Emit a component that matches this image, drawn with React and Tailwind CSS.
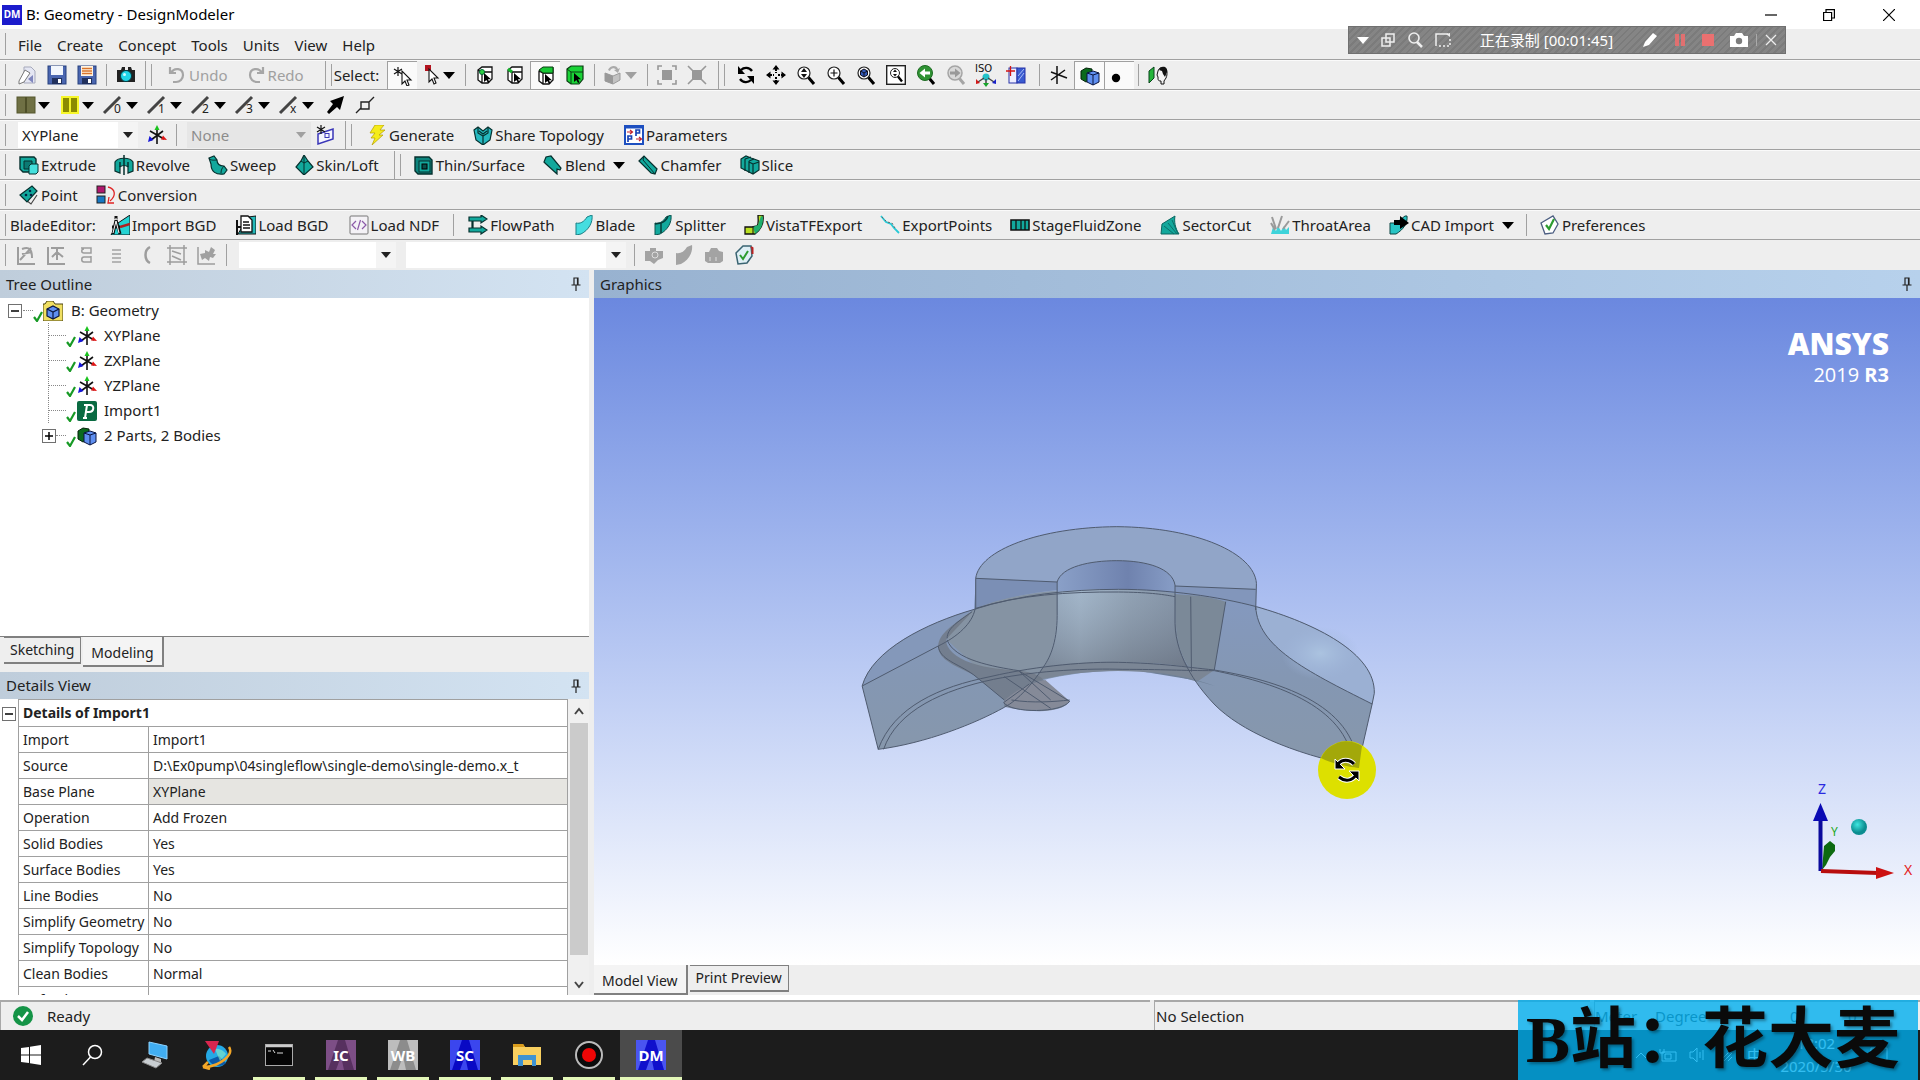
import clsx from "clsx"

const menus = ["File", "Create", "Concept", "Tools", "Units", "View", "Help"]

const details = [
  ["Import", "Import1"],
  ["Source", "D:\\Ex0pump\\04singleflow\\single-demo\\single-demo.x_t"],
  ["Base Plane", "XYPlane"],
  ["Operation", "Add Frozen"],
  ["Solid Bodies", "Yes"],
  ["Surface Bodies", "Yes"],
  ["Line Bodies", "No"],
  ["Simplify Geometry", "No"],
  ["Simplify Topology", "No"],
  ["Clean Bodies", "Normal"],
  ["Refresh", "No"],
]

const teal = "#12a89c"
const dark = "#06302e"

const lens = (
  <>
    <circle cx="8" cy="8" r="6" fill="#fff" stroke="#222" strokeWidth="1.2" />
    <path d="M12.5 12.5L18 19" stroke="#000" strokeWidth="3" />
  </>
)

const cubeOutline = (
  <path d="M3 5l4-3h10v12l-4 4H7L3 15zM3 5l4 2h10M7 7v11" fill="#fff" stroke="#111" strokeWidth="1.3" />
)
const cubeCursor = <path d="M9 8v9l2.4-2 1.6 3 1.5-.8-1.5-3H16z" fill="#000" />

const axes = (
  <>
    <path d="M10 4v15M3 6l14 8M16 6L4 15" stroke="#111" strokeWidth="1.6" fill="none" />
    <path d="M10 0L7.500 5h5z" fill="#19c21d" />
    <path d="M20 15l-6-.5 2-4z" fill="#e01414" />
    <path d="M1 17l1.500-6 4 4z" fill="#1414d8" />
  </>
)

const bodies = (
  <>
    <path d="M1 5l5-3 6 1v11l-6 2-5-3z" fill="#0b6a1d" stroke="#04210a" />
    <path d="M7 7l6-2 6 2v9l-6 3-6-3z" fill="#5f8ff0" stroke="#0a1540" />
    <path d="M7 7l6 2 6-2M13 9v10" fill="none" stroke="#0a1540" />
  </>
)

const bladeShape = "M2 8c4 1 8-1 11-6l5-2c1 7-3 15-11 19l-5 1z"

const icons = {
  newFile: <><path d="M7 2h7l4 4v12H7z" fill="#e4e6f3" stroke="#a6a9bb" /><path d="M2 16l6-11 5 3-6 9-5 2z" fill="#fff" stroke="#777" /><path d="M11 14l5-4v8z" fill="#7f86bd" /></>,
  save: <><rect x="1" y="1" width="18" height="18" fill="#4a66b0" stroke="#27407e" /><rect x="4" y="1" width="12" height="9" fill="#f2f6fc" /><rect x="5" y="13" width="10" height="6" fill="#20305c" /><rect x="11" y="14" width="3" height="4" fill="#fff" /></>,
  saveAs: <><rect x="1" y="1" width="18" height="18" fill="#4a66b0" stroke="#27407e" /><rect x="4" y="1" width="12" height="10" fill="#fff3e0" /><path d="M5 3.500h10M5 6h10M5 8.500h10" stroke="#d9752c" strokeWidth="1.400" /><rect x="5" y="13" width="10" height="6" fill="#20305c" /><rect x="11" y="14" width="3" height="4" fill="#fff" /></>,
  camera: <><path d="M1 5h4l1-3h3v3h3V2h3l1 3h3v12H1z" fill="#222" /><circle cx="10" cy="11" r="5.500" fill="#21d6e8" stroke="#043c42" /><circle cx="8.500" cy="9.500" r="1.500" fill="#cffaff" /></>,
  undo: <path d="M3 2v6h6M4 8c3-6 12-5 12 2 0 4-3 7-7 7H6" fill="none" stroke="#a6a6a6" strokeWidth="2.200" />,
  redo: <path d="M17 2v6h-6M16 8C13 2 4 3 4 10c0 4 3 7 7 7h3" fill="none" stroke="#a6a6a6" strokeWidth="2.200" />,
  pick: <><path d="M5 1v9M1 3l8 5M9 3L1 8" stroke="#111" strokeWidth="1.200" /><path d="M9 5v13l3-3 2 5 2-1-2-5h4z" fill="#fff" stroke="#111" strokeWidth="1.100" /></>,
  pickMode: <g transform="translate(4 0)"><rect x="0" y="0" width="6" height="6" fill="#b3131e" /><path d="M4 4v13l3-3 2 5 2-1-2-5h4z" fill="#fff" stroke="#111" strokeWidth="1.100" /></g>,
  selPoint: <>{cubeOutline}<circle cx="7" cy="7" r="2.500" fill="#2fd044" stroke="#063" />{cubeCursor}</>,
  selEdge: <>{cubeOutline}<path d="M3 4l4 3" stroke="#12b32a" strokeWidth="3" />{cubeCursor}</>,
  selFace: <>{cubeOutline}<path d="M3 4l4-3h10v6H7z" fill="#18c834" stroke="#0a3d12" />{cubeCursor}</>,
  selBody: <><path d="M2 4l4-3h12v13l-4 5H6l-4-3z" fill="#19d236" stroke="#0a3d12" strokeWidth="1.200" /><path d="M2 4l4 3h12M6 7v12" fill="none" stroke="#0a3d12" />{cubeCursor}</>,
  grayBox: <><path d="M2 8l8 3 7-3v7l-7 4-8-3z" fill="#c2c2c2" stroke="#9b9b9b" /><path d="M2 8l8 3v8l-8-3z" fill="#999" /><path d="M5 5c2-5 9-5 10-1l2-1-2 5-4-3 2-.5C12 3 8 2 7 6z" fill="#aaa" /></>,
  expand: <><rect x="5" y="5" width="10" height="10" fill="#989898" /><path d="M1 5V1h4M15 1h4v4M19 15v4h-4M5 19H1v-4" stroke="#989898" fill="none" strokeWidth="1.600" /></>,
  shrink: <><rect x="5" y="5" width="10" height="10" fill="#989898" /><path d="M1 1l5 5M19 1l-5 5M19 19l-5-5M1 19l5-5" stroke="#989898" strokeWidth="1.600" /></>,
  rotate: <><path d="M5 5c3-3 8-3 11 1M15 15c-3 3-8 3-11-1" fill="none" stroke="#000" strokeWidth="2.400" /><path d="M2 1v8h7zM18 19v-8h-7z" fill="#000" /></>,
  pan: <><path d="M10 4v4M10 12v4M4 10h4M12 10h4" stroke="#000" strokeWidth="2" strokeDasharray="2 1" /><path d="M10 0l3.500 4.500h-7zM10 20l3.500-4.500h-7zM0 10l4.500-3.500v7zM20 10l-4.500-3.500v7z" fill="#000" /></>,
  zoomDrag: <>{lens}<path d="M8 3l3 4H5zM8 13l3-4H5z" fill="#111" /></>,
  zoomIn: <>{lens}<path d="M8 4.500v7M4.500 8h7" stroke="#111" strokeWidth="1.200" /></>,
  zoomFit: <>{lens}<path d="M4.500 6L8 4l3.500 2v4L8 12l-3.500-2z" fill="#3159b8" stroke="#112" /><path d="M4.500 6L8 8l3.500-2M8 8v4" stroke="#112" fill="none" /></>,
  zoomBox: <><rect x="0.700" y="0.700" width="18.600" height="18.600" fill="#fff" stroke="#222" strokeWidth="1.400" /><circle cx="9" cy="8" r="4.500" fill="none" stroke="#222" /><path d="M12 11.500l4 5" stroke="#000" strokeWidth="2.400" /><path d="M9 4.500l2 2.500H7zM9 11.500L11 9H7z" fill="#111" /></>,
  zoomPrev: <><path d="M13 13l5 6" stroke="#000" strokeWidth="3" /><circle cx="9" cy="8" r="7.500" fill="#2f9233" stroke="#1d6b22" /><path d="M3.500 8L9 3.500V6.500h5v3H9v3z" fill="#fff" /></>,
  zoomNext: <><path d="M13 13l5 6" stroke="#a5a5a5" strokeWidth="3" /><circle cx="9" cy="8" r="7" fill="#d8d8d8" stroke="#a5a5a5" strokeWidth="1.500" /><path d="M14.500 8L9 3.500V6.500H4v3h5v3z" fill="#999" /></>,
  lookAt: <><rect x="3" y="3" width="8" height="15" fill="#eef" stroke="#2733a8" /><rect x="11" y="3" width="8" height="15" fill="#3a5bd0" stroke="#2733a8" /><path d="M12 16l6-8M12 11l6-7" stroke="#a9bcf5" /><path d="M0 6h9M4.500 1v10" stroke="#d31515" strokeWidth="1.300" /></>,
  axis: <path d="M8 1v18M2 15L16 5M2 7l16 6" stroke="#111" strokeWidth="1.500" />,
  bodies,
  dot: <circle cx="6" cy="12" r="4.200" fill="#000" />,
  face: <><path d="M1 6l5-4v11l-5 5z" fill="#25b53a" stroke="#06421a" /><path d="M10 6c1-5 9-5 9 1 0 2 0 4-1 6l-2 3v3h-3v-3c-3 0-3-1-3-4l-1-2z" fill="#f3f3f3" stroke="#111" /><path d="M11 5c2-5 9-4 8 2l-2 5-2-3-1-3z" fill="#111" /></>,
  olive: <><rect x="1" y="2" width="18" height="16" fill="#6f7044" /><path d="M10 2v16" stroke="#43441f" strokeWidth="1.500" /><rect x="1" y="2" width="18" height="16" fill="none" stroke="#55562d" /></>,
  yellow: <><rect x="1" y="1" width="18" height="18" fill="#f7f72a" /><rect x="3" y="3" width="14" height="14" fill="#8b8b00" /><path d="M10 1v18" stroke="#f2f22a" strokeWidth="2" /></>,
  arrowPin: <path d="M19 1l-4 14-3-3-8 7-2-2 6-8-3-3z" fill="#000" />,
  nodeBox: <path d="M1 18l5-5M6 7h8v7H6zM14 7l5-5" fill="none" stroke="#222" strokeWidth="1.400" />,
  axes,
  sketch: <><path d="M2 9l15-5v10L2 19z" fill="#f5f5ff" stroke="#3a36b8" strokeWidth="1.500" /><rect x="9" y="8.500" width="4" height="4" fill="none" stroke="#3a36b8" /><path d="M5 0v9M1 2l8 5M9 2L1 7" stroke="#111" strokeWidth="1.200" /></>,
  bolt: <path d="M8 0h9l-4 5h5l-6 5h4L5 20l3-7H4l4-5H3z" fill="#f5ec1b" stroke="#b49d00" strokeWidth=".7" />,
  share: <><path d="M1 5l4-3 5 4 5-4 4 3-2 10-7 5-7-5z" fill="#25b9c0" stroke={dark} strokeWidth="1.200" /><path d="M5 2v6l5 3 5-3V2M10 11v9M6 6l4 3 4-3" fill="none" stroke={dark} strokeWidth="1.200" /></>,
  params: <><rect x="1" y="1" width="18" height="18" fill="#fff" stroke="#1d4fc0" strokeWidth="2" /><path d="M1 2h18" stroke="#1d4fc0" strokeWidth="3" /><path d="M3 7h5M6 5l2.500 2L6 9M12 14h5M15 12l2.500 2-2.500 2" stroke="#c3202b" fill="none" strokeWidth="1.200" /><path d="M12 11V5h3.500v3H12M4 17v-6h3.500v3H4" stroke="#1842b5" fill="none" strokeWidth="1.700" /></>,
  extrude: <><path d="M1 2h14l2 2v13H4l-3-3z" fill={teal} stroke={dark} strokeWidth="1.400" /><path d="M5 6h8v8H5z" fill="#0b7a73" stroke={dark} /><path d="M10 11l2-2h7v8l-2 2h-7z" fill="#44e0dd" stroke={dark} /></>,
  revolve: <><path d="M1 7c3-5 15-5 18 0v9l-5 2v-6c-2-2-6-2-8 0v6l-5-2z" fill={teal} stroke={dark} strokeWidth="1.200" /><path d="M10 0v20M6 7v5M14 7v5" stroke={dark} strokeWidth="1.500" /></>,
  sweep: <><path d="M1 3l5-2 3 4c0 4 3 6 7 6l3 4-3 4c-8 1-13-2-13-10z" fill={teal} stroke={dark} strokeWidth="1.200" /><path d="M1 3c2 3 5 2 8 2M13 18c0-3 1-5 3-7" fill="none" stroke={dark} /></>,
  loft: <><path d="M10 0l4 6 5 6-9 8-8-8 5-6z" fill={teal} stroke={dark} strokeWidth="1.200" /><path d="M10 1v19M7 6l3 2 4-2" fill="none" stroke={dark} /></>,
  thin: <><path d="M1 2h14l3 3v14H4l-3-3z" fill="#0d857d" stroke={dark} strokeWidth="1.400" /><rect x="5" y="6" width="11" height="11" fill={teal} stroke={dark} /><rect x="8" y="9" width="5" height="5" fill="#0a4f4b" stroke="#000" /></>,
  blend: <path d="M1 7l2-5 5-1 10 12-1 2-3-1v5L3 9z" fill={teal} stroke={dark} strokeWidth="1.200" />,
  chamfer: <><path d="M1 6l5-5 13 13-2 5-4-1z" fill={teal} stroke={dark} strokeWidth="1.200" /><path d="M6 1l-1 4 12 14" fill="none" stroke={dark} /></>,
  slice: <><path d="M1 4l5-3 5 2 3 1 5 2v9l-6 4-4-2-4-2-4-2z" fill={teal} stroke={dark} strokeWidth="1.200" /><path d="M5 4v12M9 6v12M13 9v10M5 4l6-2M9 6l5-2M13 9l6-2M9 7l4 2" fill="none" stroke={dark} strokeWidth="1.200" /></>,
  point: <><path d="M3 12l9 7 6-9" fill="none" stroke="#444" strokeWidth="1.200" /><path d="M1 10L13 1l5 5-10 11z" fill={teal} stroke={dark} strokeWidth="1.200" /><circle cx="7" cy="10" r="1.300" fill="#024" /><circle cx="11" cy="6" r="1.300" fill="#024" /><circle cx="12" cy="10" r="1.300" fill="#024" /></>,
  conversion: <><rect x="1" y="1" width="8" height="7" fill="#b0186e" stroke="#222" /><rect x="1" y="11" width="8" height="7" fill="#1678c4" stroke="#222" /><path d="M12 2c8 2 8 9 2 14M13 12l-1 6h6" fill="none" stroke="#e02424" strokeWidth="1.300" /></>,
  importBgd: <><path d="M8 8L20 0v20H1z" fill="#24d3d3" stroke="#111" /><path d="M10 12l10-3" stroke="#b02020" strokeWidth="2.500" /><path d="M6 1v3M3 19L6 5l4 14M2 12h8" fill="none" stroke="#111" strokeWidth="3" /><path d="M6 3v2M3 18L6 6l3 12" fill="none" stroke="#fff" /></>,
  loadBgd: <><path d="M12 2l8-1v18H2z" fill="#24b9b9" stroke="#111" /><path d="M1 20V5M1 12h5" stroke="#111" strokeWidth="2" /><path d="M5 1h7l4 4v12H5z" fill="#fff" stroke="#111" strokeWidth="1.300" /><path d="M7 7h6M7 10h7M7 13h7" stroke="#111" strokeWidth="1.300" /></>,
  loadNdf: <><rect x="1" y="1" width="18" height="18" rx="1" fill="#f4f2f6" stroke="#777" /><path d="M7 6l-4 4 4 4M13 6l4 4-4 4M11.500 5l-3 10" fill="none" stroke="#8b5aa8" strokeWidth="1.200" /></>,
  flowPath: <path d="M1 2h12V0l6 4-6 4V6H5v7h8v-2l6 4-6 4v-2H1v-4h3V6H1z" fill={teal} stroke={dark} strokeWidth="1.200" />,
  blade: <path d={bladeShape} fill="#45dde0" stroke="#187f84" />,
  splitter: <><path d={bladeShape} fill={teal} stroke="#0a5550" /><path d="M8 8v10M2 9l6-1c3-1 6-4 7-7" fill="none" stroke="#083c39" strokeWidth="1.500" /></>,
  vista: <><path d="M1 12h7l5-1c2-2 1-6 1-11h5c1 8-1 14-8 19H1z" fill="#b9df21" stroke="#111" strokeWidth="1.300" /><path d="M9 12l5-2 3-9 2 1c0 7-1 12-8 17z" fill="#1fae6d" /><path d="M9 12v7" stroke="#111" /></>,
  exportPts: <><path d="M1 1l5 6 5 2 3 4 5 5" stroke="#26c9d6" strokeWidth="1.800" fill="none" /><path d="M2 2l5 5 5 1 3 5" stroke="#666" strokeWidth="1" strokeDasharray="2 2" fill="none" /></>,
  stage: <><path d="M1 5h18v10H1z" fill={teal} stroke="#111" strokeWidth="1.600" /><path d="M6 5v10M11 5v10M15 5v10" stroke="#111" strokeWidth="1.300" /></>,
  sector: <><path d="M2 9L15 1c-1 5 0 12 4 18H1z" fill={teal} stroke="#0a6660" /><path d="M4 11l10 8M8 8l9 11M12 5l6 14" stroke="#0b6f69" /></>,
  throat: <><path d="M1 19l2-7 3 4 2-5 3 5 3-5 2 4 3-3v7z" fill="#3ed3da" /><path d="M2 2l4 12M12 1L8 13M1 8l4 7M19 6l-6 8" stroke="#9a9a9a" strokeWidth="2" /></>,
  cadImport: <><path d="M1 8h6l9-7h2c1 7-4 14-11 18H1z" fill="#28c4c4" stroke="#0a4442" /><path d="M5 5h6V1l9 7-9 6v-4H5z" fill="#000" /></>,
  prefs: <><path d="M1 8L13 1l5 8-5 9-8 1z" fill="#fff" stroke="#4b5d80" strokeWidth="1.300" /><path d="M6 10l3 4 5-10" fill="none" stroke="#2d9c2f" strokeWidth="2.200" /></>,
  prefsRed: <><path d="M2 8L9 1h8l1 10-5 7-9 1z" fill="#dfeff5" stroke="#3a6472" strokeWidth="1.500" /><path d="M17 2l1.500 1v6" stroke="#b22" strokeWidth="2" fill="none" /><path d="M6 10l3 4 5-8" fill="none" stroke="#2d9c2f" strokeWidth="2" /></>,
  g1: <path d="M1 2v17h17M3 15L14 3M5 4c8-3 10 1 10 9M5 9l10-2" fill="none" stroke="#9d9d9d" strokeWidth="2" />,
  g2: <path d="M1 2v17h17M4 3h13M10 3v12M5 12l5-5 6 5" fill="none" stroke="#9d9d9d" strokeWidth="2" />,
  g3: <path d="M4 3h10v5H7C4 8 4 4 7 4M14 11v6H7c-3 0-3-5 0-5h7" fill="none" stroke="#9d9d9d" strokeWidth="1.500" />,
  g4: <path d="M5 5h9M5 9h9M5 13h9M5 17h9" stroke="#a2a2a2" strokeWidth="1.500" />,
  g5: <path d="M13 2c-6 3-6 13 0 16" fill="none" stroke="#9d9d9d" strokeWidth="2.500" />,
  g6: <path d="M3 0v20M17 0v20M0 3h20M0 17h20M5 6l9 3M5 11l9 4" fill="none" stroke="#9d9d9d" strokeWidth="1.500" />,
  g7: <><path d="M1 2v17h17" fill="none" stroke="#9d9d9d" strokeWidth="1.500" /><path d="M3 9l5-1V5l4 2 2-5 4 3-2 4h3l-3 4-3-1-1 4-4-3-3 2z" fill="#a0a0a0" /></>,
  g8: <><path d="M1 6h5V3h6v3h7v7l-5 2-4 4-4-3H1z" fill="#a3a3a3" /><circle cx="11" cy="10" r="3" fill="none" stroke="#ddd" /></>,
  g9: <path d={bladeShape} fill="#a3a3a3" />,
  g10: <><path d="M1 7h4l2-4h6l2 3 4 1v9l-3 2H4l-3-2z" fill="#a3a3a3" /><path d="M6 16v-4M12 16v-4" stroke="#ddd" /></>,
  folder: <><path d="M0 3h2l2-3h6l2 3h8v17H0z" fill="#f0df62" stroke="#4b4310" /><path d="M4 8l6-3 6 3v7l-6 3-6-3z" fill="#5f8ff0" stroke="#0a1540" strokeWidth="1.200" /><path d="M4 8l6 3 6-3M10 11v7" fill="none" stroke="#0a1540" strokeWidth="1.200" /></>,
  parasolid: <><rect width="20" height="20" rx="2" fill="#0a6b42" /><path d="M6 17h4M8 17L10 4M7 4h6c5 0 4 7-1 7H9" fill="none" stroke="#fff" strokeWidth="2" /></>,
}

function Icon({ name, className = "size-5" }) {
  return (
    <svg viewBox="0 0 20 20" className={clsx("shrink-0", className)} aria-hidden="true">
      {icons[name]}
    </svg>
  )
}

function Caret({ className = "text-black" }) {
  return (
    <svg viewBox="0 0 12 8" className={clsx("w-3 h-2 shrink-0", className)} aria-hidden="true">
      <path d="M0 1h12L6 8z" fill="currentColor" />
    </svg>
  )
}

function Row({ children }) {
  return (
    <div className="flex items-center h-[30px] border-b border-[#a0a0a0] border-t border-t-[#fafafa] whitespace-nowrap">
      {children}
    </div>
  )
}

function Grip({ tight }) {
  return <span className={clsx("w-1 h-[22px] ml-0.5 border-r border-[#a0a0a0] shrink-0", tight ? "mr-1" : "mr-1.5")} />
}
const End = () => <span className="w-px h-[29px] bg-[#a0a0a0] shrink-0" />
const Sep = () => <span className="w-px h-[22px] mx-1 bg-[#a0a0a0] shrink-0" />

function IconBtn({ name, label, pressed }) {
  return (
    <button
      aria-label={label}
      className={clsx(
        "w-[30px] h-[28px] flex items-center justify-center shrink-0",
        pressed && "bg-[#fafafa] border-l border-t border-[#a0a0a0]"
      )}
    >
      <Icon name={name} />
    </button>
  )
}

function DropBtn({ name, label, disabled }) {
  return (
    <button aria-label={label} disabled={disabled} className="w-11 h-[28px] flex items-center justify-end gap-0.5 pr-1.5 shrink-0">
      <Icon name={name} />
      <Caret className={disabled ? "text-[#a0a0a0]" : "text-black"} />
    </button>
  )
}

// edge display drop-downs share one slanted stroke with a digit
function LineBtn({ digit }) {
  return (
    <button aria-label={`Edge display ${digit}`} className="w-11 h-[28px] flex items-center justify-end pr-1.5 shrink-0">
      <svg viewBox="0 0 24 24" className="size-6" aria-hidden="true">
        <path d="M2 20L18 4" stroke="#444" strokeWidth="3" />
        <text x="12" y="20" fontSize="12" fontFamily="Noto Sans" fill="#222">{digit}</text>
      </svg>
      <Caret />
    </button>
  )
}

function TextBtn({ name, children, disabled, drop, wide }) {
  return (
    <button
      disabled={disabled}
      className={clsx(
        "h-[28px] flex items-center gap-0.5 shrink-0",
        drop ? "pl-[9px] pr-1" : wide ? "px-2.5" : "px-[9px]",
        disabled ? "text-[#a0a0a0]" : "text-[#222]"
      )}
    >
      <Icon name={name} />
      <span>{children}</span>
      {drop && <Caret className="ml-1.5 text-black" />}
    </button>
  )
}

function Combo({ label, value, className, disabled }) {
  return (
    <label className={clsx("relative flex items-center h-[26px] shrink-0", className)}>
      <span className="sr-only">{label}</span>
      <select
        disabled={disabled}
        className={clsx("appearance-none size-full pl-1 outline-none", disabled ? "bg-[#e6e6e6] text-[#8c8c8c]" : "bg-white text-[#222]")}
      >
        <option>{value}</option>
      </select>
      <span className={clsx("absolute right-0 inset-y-0 w-5 flex items-center justify-center", disabled ? "bg-[#e6e6e6] text-[#a0a0a0]" : "bg-[#f4f4f4]")}>
        <svg viewBox="0 0 10 6" className="w-2.5 h-1.5" aria-hidden="true"><path d="M0 0h10L5 6z" fill="currentColor" /></svg>
      </span>
    </label>
  )
}

function Toolbars() {
  return (
    <div className="bg-[#eeeeee] text-[15px] text-[#222]">
      <div className="flex items-center h-[31px] gap-px border-b border-[#a0a0a0]">
        <Grip tight />
        {menus.map(m => (
          <button key={m} className="px-[7px] pt-0.5">{m}</button>
        ))}
      </div>

      <Row>
        <Grip />
        <IconBtn name="newFile" label="New" />
        <IconBtn name="save" label="Save" />
        <IconBtn name="saveAs" label="Export" />
        <Sep />
        <IconBtn name="camera" label="Image capture" />
        <span className="w-1" />
        <End />
        <Grip />
        <TextBtn name="undo" disabled>Undo</TextBtn>
        <TextBtn name="redo" disabled>Redo</TextBtn>
        <span className="w-3" />
        <End />
        <Grip />
        <span className="-ml-1 pr-2">Select:</span>
        <IconBtn name="pick" label="New selection" pressed />
        <DropBtn name="pickMode" label="Select mode" />
        <Sep />
        <IconBtn name="selPoint" label="Points" />
        <IconBtn name="selEdge" label="Edges" />
        <IconBtn name="selFace" label="Faces" pressed />
        <IconBtn name="selBody" label="Bodies" />
        <Sep />
        <DropBtn name="grayBox" label="Extend selection" disabled />
        <Sep />
        <IconBtn name="expand" label="Expand" />
        <IconBtn name="shrink" label="Shrink" />
        <span className="w-1.5" />
        <End />
        <Grip />
        <IconBtn name="rotate" label="Rotate" />
        <IconBtn name="pan" label="Pan" />
        <IconBtn name="zoomDrag" label="Zoom" />
        <IconBtn name="zoomIn" label="Box zoom" />
        <IconBtn name="zoomFit" label="Zoom to fit" />
        <IconBtn name="zoomBox" label="Magnifier window" />
        <IconBtn name="zoomPrev" label="Previous view" />
        <IconBtn name="zoomNext" label="Next view" />
        <button aria-label="Isometric view" className="w-[30px] flex justify-center">
          <svg viewBox="0 0 24 28" className="w-6 h-7" aria-hidden="true">
            <text x="1" y="11" fontSize="10" fontFamily="DejaVu Sans" fill="#111">ISO</text>
            <circle cx="12" cy="16" r="3.500" fill="#22c3c9" />
            <path d="M12 18v5M10 17l-6 4M14 17l6 4" stroke="#444" strokeWidth="1.500" />
            <path d="M12 26l-3-4h6z" fill="#16a52b" />
            <path d="M2 23v-5l4 4z" fill="#d11919" />
            <path d="M22 23v-5l-4 4z" fill="#1a22c8" />
          </svg>
        </button>
        <IconBtn name="lookAt" label="Look at" />
        <span className="w-1" />
        <Sep />
        <IconBtn name="axis" label="Display plane" />
        <IconBtn name="bodies" label="Display model" pressed />
        <IconBtn name="dot" label="Display points" pressed />
        <Sep />
        <IconBtn name="face" label="Display inner faces" />
      </Row>

      <Row>
        <Grip />
        <DropBtn name="olive" label="Face color" />
        <DropBtn name="yellow" label="Edge color" />
        {["0", "1", "2", "3", "x"].map(d => <LineBtn key={d} digit={d} />)}
        <IconBtn name="arrowPin" label="Edge direction" />
        <IconBtn name="nodeBox" label="Display vertices" />
      </Row>

      <Row>
        <Grip />
        <span className="w-1.5" />
        <Combo label="Active plane" value="XYPlane" className="w-[120px]" />
        <span className="w-1" />
        <IconBtn name="axes" label="New plane" />
        <Sep />
        <span className="w-1.5" />
        <Combo label="Active sketch" value="None" className="w-[124px]" disabled />
        <IconBtn name="sketch" label="New sketch" />
        <span className="w-1" />
        <End />
        <Grip />
        <TextBtn name="bolt">Generate</TextBtn>
        <TextBtn name="share" wide>Share Topology</TextBtn>
        <TextBtn name="params" wide>Parameters</TextBtn>
      </Row>

      <Row>
        <Grip tight />
        <TextBtn name="extrude">Extrude</TextBtn>
        <TextBtn name="revolve">Revolve</TextBtn>
        <TextBtn name="sweep">Sweep</TextBtn>
        <TextBtn name="loft">Skin/Loft</TextBtn>
        <span className="w-1.5" />
        <End />
        <Grip tight />
        <TextBtn name="thin">Thin/Surface</TextBtn>
        <TextBtn name="blend" drop>Blend</TextBtn>
        <TextBtn name="chamfer">Chamfer</TextBtn>
        <TextBtn name="slice">Slice</TextBtn>
      </Row>

      <Row>
        <Grip tight />
        <TextBtn name="point">Point</TextBtn>
        <TextBtn name="conversion">Conversion</TextBtn>
      </Row>

      <Row>
        <Grip tight />
        <span className="pr-1">BladeEditor:</span>
        <TextBtn name="importBgd" wide>Import BGD</TextBtn>
        <TextBtn name="loadBgd" wide>Load BGD</TextBtn>
        <TextBtn name="loadNdf" wide>Load NDF</TextBtn>
        <Sep />
        <TextBtn name="flowPath" wide>FlowPath</TextBtn>
        <TextBtn name="blade">Blade</TextBtn>
        <TextBtn name="splitter">Splitter</TextBtn>
        <TextBtn name="vista">VistaTFExport</TextBtn>
        <TextBtn name="exportPts">ExportPoints</TextBtn>
        <TextBtn name="stage">StageFluidZone</TextBtn>
        <TextBtn name="sector" wide>SectorCut</TextBtn>
        <TextBtn name="throat">ThroatArea</TextBtn>
        <TextBtn name="cadImport" drop>CAD Import</TextBtn>
        <span className="w-1" />
        <Sep />
        <TextBtn name="prefs">Preferences</TextBtn>
      </Row>

      <div className="flex items-center h-[30px]">
        <Grip />
        {["g1", "g2", "g3", "g4", "g5", "g6", "g7"].map(n => (
          <IconBtn key={n} name={n} label={`Sketch tool ${n}`} />
        ))}
        <Sep />
        <span className="w-2" />
        <Combo label="Blade row" value="" className="w-[157px]" />
        <span className="w-2.5" />
        <Combo label="Layer" value="" className="w-[220px]" />
        <span className="w-1" />
        <Sep />
        <IconBtn name="g8" label="Flow" />
        <IconBtn name="g9" label="Blade" />
        <IconBtn name="g10" label="Stage" />
        <IconBtn name="prefsRed" label="Check" />
      </div>
    </div>
  )
}

function Pin() {
  return (
    <button aria-label="Auto hide">
      <svg viewBox="0 0 10 14" className="w-2.5 h-3.5" aria-hidden="true">
        <path d="M3 1h4v7H3zM0.500 8h9M5 8v6M6.500 1v7" fill="none" stroke="#222" strokeWidth="1.200" />
      </svg>
    </button>
  )
}

const Check = () => (
  <svg viewBox="0 0 10 12" className="w-2.5 h-3 mt-2.5 shrink-0" aria-hidden="true">
    <path d="M1 7l3 4 5-9" fill="none" stroke="#179a25" strokeWidth="2.200" />
  </svg>
)

function Expander({ open }) {
  return (
    <button aria-label={open ? "Collapse" : "Expand"} className="size-[14px] border border-[#707070] bg-white shrink-0">
      <svg viewBox="0 0 12 12" className="size-3" aria-hidden="true">
        <path d={open ? "M2 6h8" : "M2 6h8M6 2v8"} stroke="#000" strokeWidth="1.500" />
      </svg>
    </button>
  )
}

const treeItems = [
  ["axes", "XYPlane"],
  ["axes", "ZXPlane"],
  ["axes", "YZPlane"],
  ["parasolid", "Import1"],
  ["bodies", "2 Parts, 2 Bodies"],
]

function Tree() {
  return (
    <ul className="h-[338px] bg-white">
      <li>
        <div className="flex items-center h-[25px] pl-2">
          <Expander open />
          <span className="w-2.5 ml-px border-t border-dotted border-[#888]" />
          <Check />
          <Icon name="folder" />
          <span className="ml-2">B: Geometry</span>
        </div>
        <ul>
          {treeItems.map(([icon, name], i) => {
            const last = i === treeItems.length - 1
            return (
              <li key={name} className="flex items-center h-[25px] pl-[42px]">
                {last ? (
                  <Expander />
                ) : (
                  <span className="w-[7px] h-full border-r border-dotted border-[#888]" />
                )}
                <span className={clsx("border-t border-dotted border-[#888]", last ? "w-2.5" : "w-[17px]")} />
                <Check />
                <Icon name={icon} className="size-5 mx-px" />
                <span className="ml-1.5">{name}</span>
              </li>
            )
          })}
        </ul>
      </li>
    </ul>
  )
}

function Tab({ active, children }) {
  return (
    <button
      className={clsx(
        "mr-0.5 border-[#808080] border-b-2",
        active ? "h-[30px] bg-[#f4f4f4] border-r-2 px-2 pt-1" : "h-[27px] bg-[#eeeeee] border-t border-r px-1.5"
      )}
    >
      {children}
    </button>
  )
}

function Details() {
  return (
    <div className="flex h-[296px] overflow-hidden bg-white text-sm">
      <div className="w-[18px] pl-0.5 pt-1.5 shrink-0">
        <Expander open />
      </div>
      <div className="flex-1">
        <table className="w-full table-fixed border-collapse whitespace-nowrap">
          <colgroup>
            <col className="w-[130px]" />
            <col />
          </colgroup>
          <thead>
            <tr className="h-[27px]">
              <th colSpan={2} className="border border-[#a0a0a0] px-1 text-left font-bold">Details of Import1</th>
            </tr>
          </thead>
          <tbody>
            {details.map(([k, v]) => (
              <tr key={k} className="h-[26px]">
                <td className="border border-[#a0a0a0] px-1">{k}</td>
                <td className={clsx("border border-[#a0a0a0] px-1", k === "Base Plane" && "bg-[#e6e5e1]")}>{v}</td>
              </tr>
            ))}
          </tbody>
        </table>
      </div>
      <div className="w-[21px] flex flex-col items-center bg-[#f0f0f0] shrink-0">
        <svg viewBox="0 0 10 8" className="w-2.5 h-2 my-2" aria-hidden="true"><path d="M1 7l4-5 4 5" fill="none" stroke="#444" strokeWidth="2" /></svg>
        <span className="w-[18px] h-[232px] bg-[#cbcbcb]" />
        <svg viewBox="0 0 10 8" className="w-2.5 h-2 mt-auto mb-1.5" aria-hidden="true"><path d="M1 1l4 5 4-5" fill="none" stroke="#444" strokeWidth="2" /></svg>
      </div>
    </div>
  )
}

function PumpModel() {
  const line = { fill: "none", stroke: "#4f5b6f", strokeWidth: 1, vectorEffect: "non-scaling-stroke" }
  return (
    <svg viewBox="0 0 1568 960" preserveAspectRatio="none" className="absolute left-[246px] top-[202px] w-[560px] h-[320px]" aria-label="Impeller flow passage">
      <defs>
        <linearGradient id="hub" x1="0" x2="1" y1="0" y2="0">
          <stop offset="0" stopColor="#8c9cb0" />
          <stop offset=".25" stopColor="#9fb1c4" />
          <stop offset=".6" stopColor="#8492a3" />
          <stop offset="1" stopColor="#6f7a8c" />
        </linearGradient>
        <linearGradient id="hubShade" x1="0" x2="0" y1="0" y2="1">
          <stop offset="0" stopColor="#a9bfd4" stopOpacity=".35" />
          <stop offset="1" stopColor="#6e7886" stopOpacity=".55" />
        </linearGradient>
        <linearGradient id="bore" x1="0" x2="1" y1="0" y2="0">
          <stop offset="0" stopColor="#8aa0c8" />
          <stop offset=".6" stopColor="#6f82ae" />
          <stop offset="1" stopColor="#879dc6" />
        </linearGradient>
        <radialGradient id="shine">
          <stop offset="0" stopColor="#abc3e0" />
          <stop offset="1" stopColor="#9fb5da" stopOpacity="0" />
        </radialGradient>
        <linearGradient id="wing" x1="0" x2="0" y1="0" y2="1">
          <stop offset="0" stopColor="#8499c0" />
          <stop offset=".5" stopColor="#8497b3" />
          <stop offset="1" stopColor="#8797aa" />
        </linearGradient>
      </defs>

      {/* upper ring */}
      <path d="M380 235C390 150 560 82 775 80C1000 82 1160 160 1166 250L1164 330C1000 300 560 260 376 328z" fill="#91a5c8" />
      <path d="M380 235L608 246V270C520 280 440 300 376 328z" fill="#7b8fb5" />
      <path d="M938 258L1164 268V320L938 280z" fill="#8296bb" />

      {/* shroud with both wings */}
      <path d="M62 558C90 450 240 370 376 328C500 285 640 268 780 268C920 268 1060 290 1166 320C1330 370 1500 460 1496 580L1490 612L1450 800C1260 760 1120 690 1050 615C1030 592 1008 565 990 535C900 505 700 500 555 545C510 570 480 620 460 622C380 670 240 730 107 748z" fill="url(#wing)" />
      <path d="M62 558C90 450 240 370 368 335C330 370 280 400 275 438z" fill="#8498ba" />
      <path d="M1164 320C1330 370 1500 460 1496 580L1490 612C1300 510 1170 440 1164 320z" fill="#9bb0d3" />
      <ellipse cx="1345" cy="460" rx="110" ry="80" fill="url(#shine)" />

      {/* blade passage and hub */}
      <path d="M300 420C310 370 360 340 380 325C470 285 600 270 610 275C612 400 600 470 570 500L555 545C500 500 420 520 370 490z" fill="#8593a3" />
      <path d="M608 275C750 262 860 265 938 278C938 400 945 450 975 500C850 480 700 485 572 500C600 440 612 380 608 275z" fill="url(#hub)" />
      <path d="M608 275C750 262 860 265 938 278C938 400 945 450 975 500C850 480 700 485 572 500C600 440 612 380 608 275z" fill="url(#hubShade)" />
      <path d="M608 270V246C620 200 700 182 775 182C860 182 930 205 938 255V280C860 265 720 262 608 275z" fill="url(#bore)" />
      <path d="M938 282C985 285 1040 290 1080 305L1048 510C1010 505 990 502 975 498C945 450 938 400 938 282z" fill="#7b8998" />
      <path d="M570 500C700 480 860 480 1048 510L1000 545C880 505 700 500 540 545z" fill="#7b8695" />
      <path d="M370 335C320 370 275 400 275 440C275 480 330 500 375 525L460 600V620C540 640 620 640 643 604L570 540C540 500 450 520 370 490C310 470 290 430 300 415z" fill="#6f7884" opacity=".8" />
      <path d="M575 540L643 604C600 640 480 635 458 605C490 570 530 550 575 540z" fill="#858a98" />
      <path d="M850 515C930 520 990 535 1050 558L990 540z" fill="#6f8098" />

      <path d="M380 235C390 150 560 82 775 80C1000 82 1160 160 1166 250L1164 330M380 235V328M380 235L608 246M938 258L1164 268" {...line} />
      <path d="M608 330V246C620 200 700 182 775 182C860 182 930 205 938 255V370C940 480 1010 570 1050 615C1120 690 1260 760 1450 800" {...line} />
      <path d="M608 330C610 420 590 470 570 500C540 550 500 600 460 622C380 670 240 730 107 748L62 558C90 450 240 370 376 328C500 285 640 268 780 268C920 268 1060 290 1166 320C1330 370 1500 460 1496 580L1490 612L1450 800" {...line} />
      <path d="M1164 320C1170 440 1300 510 1490 612M62 558L275 438C330 410 370 370 378 328M370 335C330 365 300 385 300 415" {...line} />
      <path d="M380 325C500 285 640 275 780 276C860 277 900 282 938 290M982 290L984 515M1080 305L1048 510" {...line} />
      <path d="M107 748C150 620 280 560 420 530C560 495 700 485 780 487C900 490 960 500 1048 510C1220 540 1440 610 1450 800" {...line} />
      <path d="M122 748C160 630 290 570 430 538C560 510 700 505 790 508C900 508 960 512 1048 512C1200 545 1420 610 1437 795" {...line} />
      <path d="M275 438C280 480 330 490 375 525L460 600M300 420C320 480 430 500 500 512L643 604C620 640 480 640 458 608L530 552M480 600C540 610 600 605 643 600M460 530L590 625M500 512L590 600" {...line} />
    </svg>
  )
}

function Viewport() {
  return (
    <div className="relative h-[667px] overflow-hidden bg-gradient-to-b from-[#6b88df] to-white">
      <div className="absolute right-[31px] top-[25px] text-right text-white font-['Open_Sans',sans-serif]">
        <div className="font-extrabold text-[30px] leading-[42px]">ANSYS</div>
        <div className="text-xl leading-5">2019 <b>R3</b></div>
      </div>
      <PumpModel />
      <svg viewBox="0 0 60 60" className="absolute left-[723px] top-[442px] size-[60px]" aria-hidden="true">
        <circle cx="30" cy="30" r="29" fill="#dde000" />
        <path d="M28 1.200A29 29 0 0 1 45 6L42 28C36 27 20 26 4 18A29 29 0 0 1 28 1.200z" fill="#a3a80a" />
        <path d="M21 24c4-5 11-5 16 0M39 35c-4 6-11 7-17 2" fill="none" stroke="#fff" strokeWidth="5" />
        <path d="M18 19v10h10zM42 41V31H32z" fill="#000" stroke="#fff" />
        <path d="M21 24c4-5 11-5 16 0M39 35c-4 6-11 7-17 2" fill="none" stroke="#000" strokeWidth="3" />
      </svg>
      <svg viewBox="0 0 110 110" className="absolute right-0 bottom-[81px] size-[110px]" aria-label="Triad">
        <defs>
          <radialGradient id="ball" cx=".4" cy=".35">
            <stop offset="0" stopColor="#3fe6e0" />
            <stop offset="1" stopColor="#0b8d90" />
          </radialGradient>
        </defs>
        <path d="M12 96l2-24 6-5 5 4v6l-5 6-4 8z" fill="#0d6a10" />
        <path d="M10.500 97V45" stroke="#0a0a9c" strokeWidth="4" />
        <path d="M10.500 29L3 47h15z" fill="#0a0ab4" />
        <path d="M11 97L68 99" stroke="#b80d0d" strokeWidth="4" />
        <path d="M66 93v12l18-6z" fill="#cc1111" />
        <circle cx="49" cy="53" r="8" fill="url(#ball)" />
        <text x="8" y="20" fontSize="14" fontFamily="Noto Sans" fill="#2a2ae0">Z</text>
        <text x="21" y="62" fontSize="12" fontFamily="Noto Sans" fill="#1ba81b">Y</text>
        <text x="94" y="101" fontSize="14" fontFamily="Noto Sans" fill="#e32222">X</text>
      </svg>
    </div>
  )
}

function Recorder() {
  return (
    <div className="absolute left-[1348px] top-[26px] w-[438px] h-[28px] flex items-center justify-between px-2 text-white border border-[#707070] bg-[repeating-linear-gradient(135deg,#858585_0_3px,#7b7b7b_3px_5px)]">
      <div className="flex items-center gap-3">
        <button aria-label="Menu"><Caret className="text-white" /></button>
        <button aria-label="Windows"><svg viewBox="0 0 14 14" className="size-3.5"><path d="M1 5h8v8H1zM5 1h8v8H5z" fill="none" stroke="#eee" strokeWidth="1.500" /></svg></button>
        <button aria-label="Zoom"><svg viewBox="0 0 16 16" className="size-4"><circle cx="7" cy="6" r="5" fill="none" stroke="#eee" strokeWidth="1.600" /><path d="M10 10l5 5" stroke="#eee" strokeWidth="2.500" /></svg></button>
        <button aria-label="Region"><svg viewBox="0 0 16 14" className="w-4 h-3.5"><path d="M1 13V1h12" fill="none" stroke="#eee" strokeWidth="1.500" /><path d="M4 13h11V4" fill="none" stroke="#eee" strokeWidth="1.500" strokeDasharray="2 2" /><path d="M15 0v4l-4-3z" fill="#eee" /></svg></button>
      </div>
      <span className="text-[15px]">正在录制 [00:01:45]</span>
      <div className="flex items-center gap-4">
        <button aria-label="Draw"><svg viewBox="0 0 16 16" className="size-4"><path d="M1 15l2-5 8-9 4 3-8 9z" fill="#fff" /></svg></button>
        <button aria-label="Pause"><svg viewBox="0 0 12 14" className="w-3 h-3.5"><path d="M1 1h4v12H1zM7 1h4v12H7z" fill="#e07070" /></svg></button>
        <button aria-label="Stop"><svg viewBox="0 0 12 12" className="size-3"><rect width="12" height="12" fill="#ea7070" /></svg></button>
        <button aria-label="Snapshot"><svg viewBox="0 0 18 14" className="w-[18px] h-3.5"><path d="M0 3h4l2-3h6l2 3h4v11H0z" fill="#fff" /><circle cx="9" cy="8" r="3.200" fill="#7c7c7c" /></svg></button>
        <button aria-label="Close" className="-ml-2 pl-2 border-l border-[#aaa]"><svg viewBox="0 0 12 12" className="size-3"><path d="M1 1l10 10M11 1L1 11" stroke="#eee" strokeWidth="1.300" /></svg></button>
      </div>
    </div>
  )
}

function AppTile({ bg, tri, text }) {
  return (
    <span className={clsx("relative size-[30px] flex items-center justify-center", bg)}>
      <svg viewBox="0 0 30 30" className="absolute inset-0 size-full" aria-hidden="true"><path d="M12 0h7l9 30H18l-3-14-5 14H2z" fill={tri} /></svg>
      <b className="relative text-white text-[15px] leading-5">{text}</b>
    </span>
  )
}

const taskbar = [
  { label: "Start", icon: <svg viewBox="0 0 20 20" className="size-5"><path d="M0 3l8-1v7.500H0zM9 1.800L20 0v9.500H9zM0 10.500h8V18l-8-1zM9 10.500h11V20L9 18.200z" fill="#fff" /></svg> },
  { label: "Search", icon: <svg viewBox="0 0 22 22" className="size-[22px]"><circle cx="13" cy="8" r="6.500" fill="none" stroke="#fff" strokeWidth="1.500" /><path d="M8.500 13L1 21" stroke="#fff" strokeWidth="1.500" /></svg> },
  { label: "This PC", icon: <svg viewBox="0 0 28 28" className="size-7"><path d="M8 1l18 4v13L8 13z" fill="#41aef2" stroke="#8ed3ff" /><path d="M14 16l6 2v3h-7z" fill="#bbb" /><path d="M1 21l5-4 15 5-6 5z" fill="#c9ced2" stroke="#888" /></svg> },
  { label: "Browser", icon: <svg viewBox="0 0 30 30" className="size-[30px]"><circle cx="15" cy="16" r="11" fill="#25a9e5" /><path d="M7 20c2 6 12 8 17 3l-7-7z" fill="#0b5ba8" /><path d="M13 9c4-1 9 2 11 5l-6 7z" fill="#8ff0c4" opacity=".6" /><path d="M3 1h14l-5 13z" fill="#d9264e" /><path d="M27 7c5 7-8 19-24 20M1 27l5-5M1 27l7 2" fill="none" stroke="#f3a627" strokeWidth="2.500" /></svg> },
  { label: "Command Prompt", open: true, icon: <svg viewBox="0 0 28 22" className="w-7 h-[22px]"><rect x=".5" y=".5" width="27" height="21" fill="#060606" stroke="#aaa" /><path d="M1 2h26" stroke="#ccc" strokeWidth="2.500" /><path d="M3 7h3M8 6l2 3M12 9h6" stroke="#ddd" /></svg> },
  { label: "IC", open: true, icon: <AppTile bg="bg-[#7d4e86]" tri="#57305f" text="IC" /> },
  { label: "WB", open: true, icon: <AppTile bg="bg-[#bdbdbd]" tri="#8c8c8c" text="WB" /> },
  { label: "SC", open: true, icon: <AppTile bg="bg-[#3b46ee]" tri="#0909c4" text="SC" /> },
  { label: "File Explorer", open: true, icon: <svg viewBox="0 0 28 24" className="w-7 h-6"><path d="M0 1h10l2 3h16v18H0z" fill="#f8cf5f" /><path d="M0 1h10l2 3H0z" fill="#d99c1c" /><path d="M5 23v-11h18v11h-4v-6h-9v6z" fill="#3f93d2" /></svg> },
  { label: "Recorder", open: true, icon: <svg viewBox="0 0 28 28" className="size-7"><circle cx="14" cy="14" r="13" fill="#0b0b0b" stroke="#bbb" strokeWidth="2" /><circle cx="14" cy="14" r="7" fill="#ee0606" /></svg> },
  { label: "DM", open: true, active: true, icon: <AppTile bg="bg-[#4a55f0]" tri="#1010cc" text="DM" /> },
]

function App() {
  return (
    <div className="relative min-h-screen flex flex-col bg-[#eeeeee] overflow-hidden text-[#222] font-['Noto_Sans','Noto_Sans_CJK_SC',sans-serif]">
      <header className="flex items-center h-[29px] bg-white">
        <span className="ml-0.5 size-5 flex items-center justify-center bg-[#1c1ccc] text-white text-[10px] font-bold">DM</span>
        <h1 className="ml-1 text-[15px] text-black">B: Geometry - DesignModeler</h1>
        <div className="ml-auto flex">
          <button aria-label="Minimize" className="w-[58px] flex justify-center"><svg viewBox="0 0 12 12" className="size-3"><path d="M0 6h12" stroke="#000" strokeWidth="1.200" /></svg></button>
          <button aria-label="Restore" className="w-[58px] flex justify-center"><svg viewBox="0 0 12 12" className="size-3"><path d="M.6 3.500h8v8h-8zM3 3V.6h8.400V9H9" fill="none" stroke="#000" strokeWidth="1.200" /></svg></button>
          <button aria-label="Close" className="w-[62px] flex justify-center"><svg viewBox="0 0 12 12" className="size-3"><path d="M0 0l12 12M12 0L0 12" stroke="#000" strokeWidth="1.200" /></svg></button>
        </div>
      </header>

      <Toolbars />

      <main className="flex flex-1 min-h-0">
        <section className="w-[589px] shrink-0 text-[15px]">
          <div className="flex items-center justify-between h-7 pl-1.5 pr-2 bg-gradient-to-r from-[#bfcddb] to-[#d3e3f2]">
            <h2>Tree Outline</h2>
            <Pin />
          </div>
          <Tree />
          <div className="flex h-9 pl-1 border-t border-[#808080] text-sm">
            <Tab>Sketching</Tab>
            <Tab active>Modeling</Tab>
          </div>
          <div className="flex items-center justify-between h-[27px] pl-1.5 pr-2 bg-gradient-to-r from-[#bfcddb] to-[#d3e3f2]">
            <h2>Details View</h2>
            <Pin />
          </div>
          <Details />
        </section>

        <section className="flex-1 ml-[5px] text-[15px]">
          <div className="flex items-center justify-between h-7 pl-1.5 pr-2 bg-gradient-to-r from-[#98b2d0] to-[#b7d1ec]">
            <h2>Graphics</h2>
            <Pin />
          </div>
          <Viewport />
          <div className="flex h-[30px] text-sm">
            <Tab active>Model View</Tab>
            <Tab>Print Preview</Tab>
          </div>
        </section>
      </main>

      <div className="h-[5px] bg-white" />
      <footer className="flex h-[30px] text-[15px]">
        <div className="flex items-center w-[1150px] pl-3 border-t-2 border-l border-[#a8a8a8]">
          <svg viewBox="0 0 20 20" className="size-5" aria-hidden="true">
            <circle cx="10" cy="10" r="10" fill="#159447" />
            <path d="M5 10l4 4 6-8" fill="none" stroke="#fff" strokeWidth="2.500" />
          </svg>
          <span className="ml-3.5">Ready</span>
        </div>
        <div className="flex items-center ml-1 w-[436px] pl-px border-t-2 border-l border-[#a8a8a8]">No Selection</div>
        <div className="flex items-center ml-1 flex-1 border-t-2 border-l border-[#a8a8a8] text-[#333]">
          <span className="w-[60px]">Meter</span>
          <span className="w-[135px]">Degree</span>
          <span className="w-[58px]">0</span>
          <span>0</span>
        </div>
      </footer>

      <nav className="flex h-[50px] bg-[#1c1c1c] text-white">
        {taskbar.map(t => (
          <button
            key={t.label}
            aria-label={t.label}
            className={clsx("relative w-[62px] flex items-center justify-center shrink-0", t.active && "bg-[#4b4b4b]")}
          >
            {t.icon}
            {t.open && <span className={clsx("absolute bottom-0 h-[3px] bg-[#e3f7b8]", t.active ? "inset-x-0" : "inset-x-[5px]")} />}
          </button>
        ))}
        <div className="ml-auto flex items-center gap-3 pr-8 text-[15px]">
          <svg viewBox="0 0 12 8" className="w-3 h-2"><path d="M1 7l5-5 5 5" fill="none" stroke="#fff" /></svg>
          <svg viewBox="0 0 18 14" className="w-[18px] h-3.5"><path d="M3 4h14v9H3zM1 1v4h4V1M6 6h6v5H6z" fill="none" stroke="#fff" /></svg>
          <svg viewBox="0 0 18 16" className="w-[18px] h-4"><path d="M1 5h3l4-4v14l-4-4H1zM11 5v6M14 3v10" fill="none" stroke="#fff" /></svg>
          <svg viewBox="0 0 16 14" className="w-4 h-3.5"><path d="M1 13L13 1M5 13l8-8M9 13l4-4" fill="none" stroke="#fff" /></svg>
          <span>中</span>
          <div className="w-[84px] text-center leading-[23px]">
            <div>18:02</div>
            <div>2020/5/30</div>
          </div>
          <svg viewBox="0 0 18 16" className="w-[18px] h-4"><path d="M1 1h16v12H9l-3 2v-2H1z" fill="none" stroke="#fff" /></svg>
        </div>
      </nav>

      <Recorder />
      <div className="absolute right-[2px] bottom-0 w-[400px] h-20 bg-[#00aeed]/80" />
      <div className="absolute right-[2px] bottom-0 w-[400px] h-20 flex items-center pl-2 whitespace-nowrap text-[#0a0a0a] text-[66px] leading-[80px] font-bold font-['Liberation_Serif','Noto_Sans_CJK_SC',serif] [text-shadow:2px_2px_3px_rgba(0,0,0,0.35)]">
        B站：花大麦
      </div>
    </div>
  )
}

export default App
